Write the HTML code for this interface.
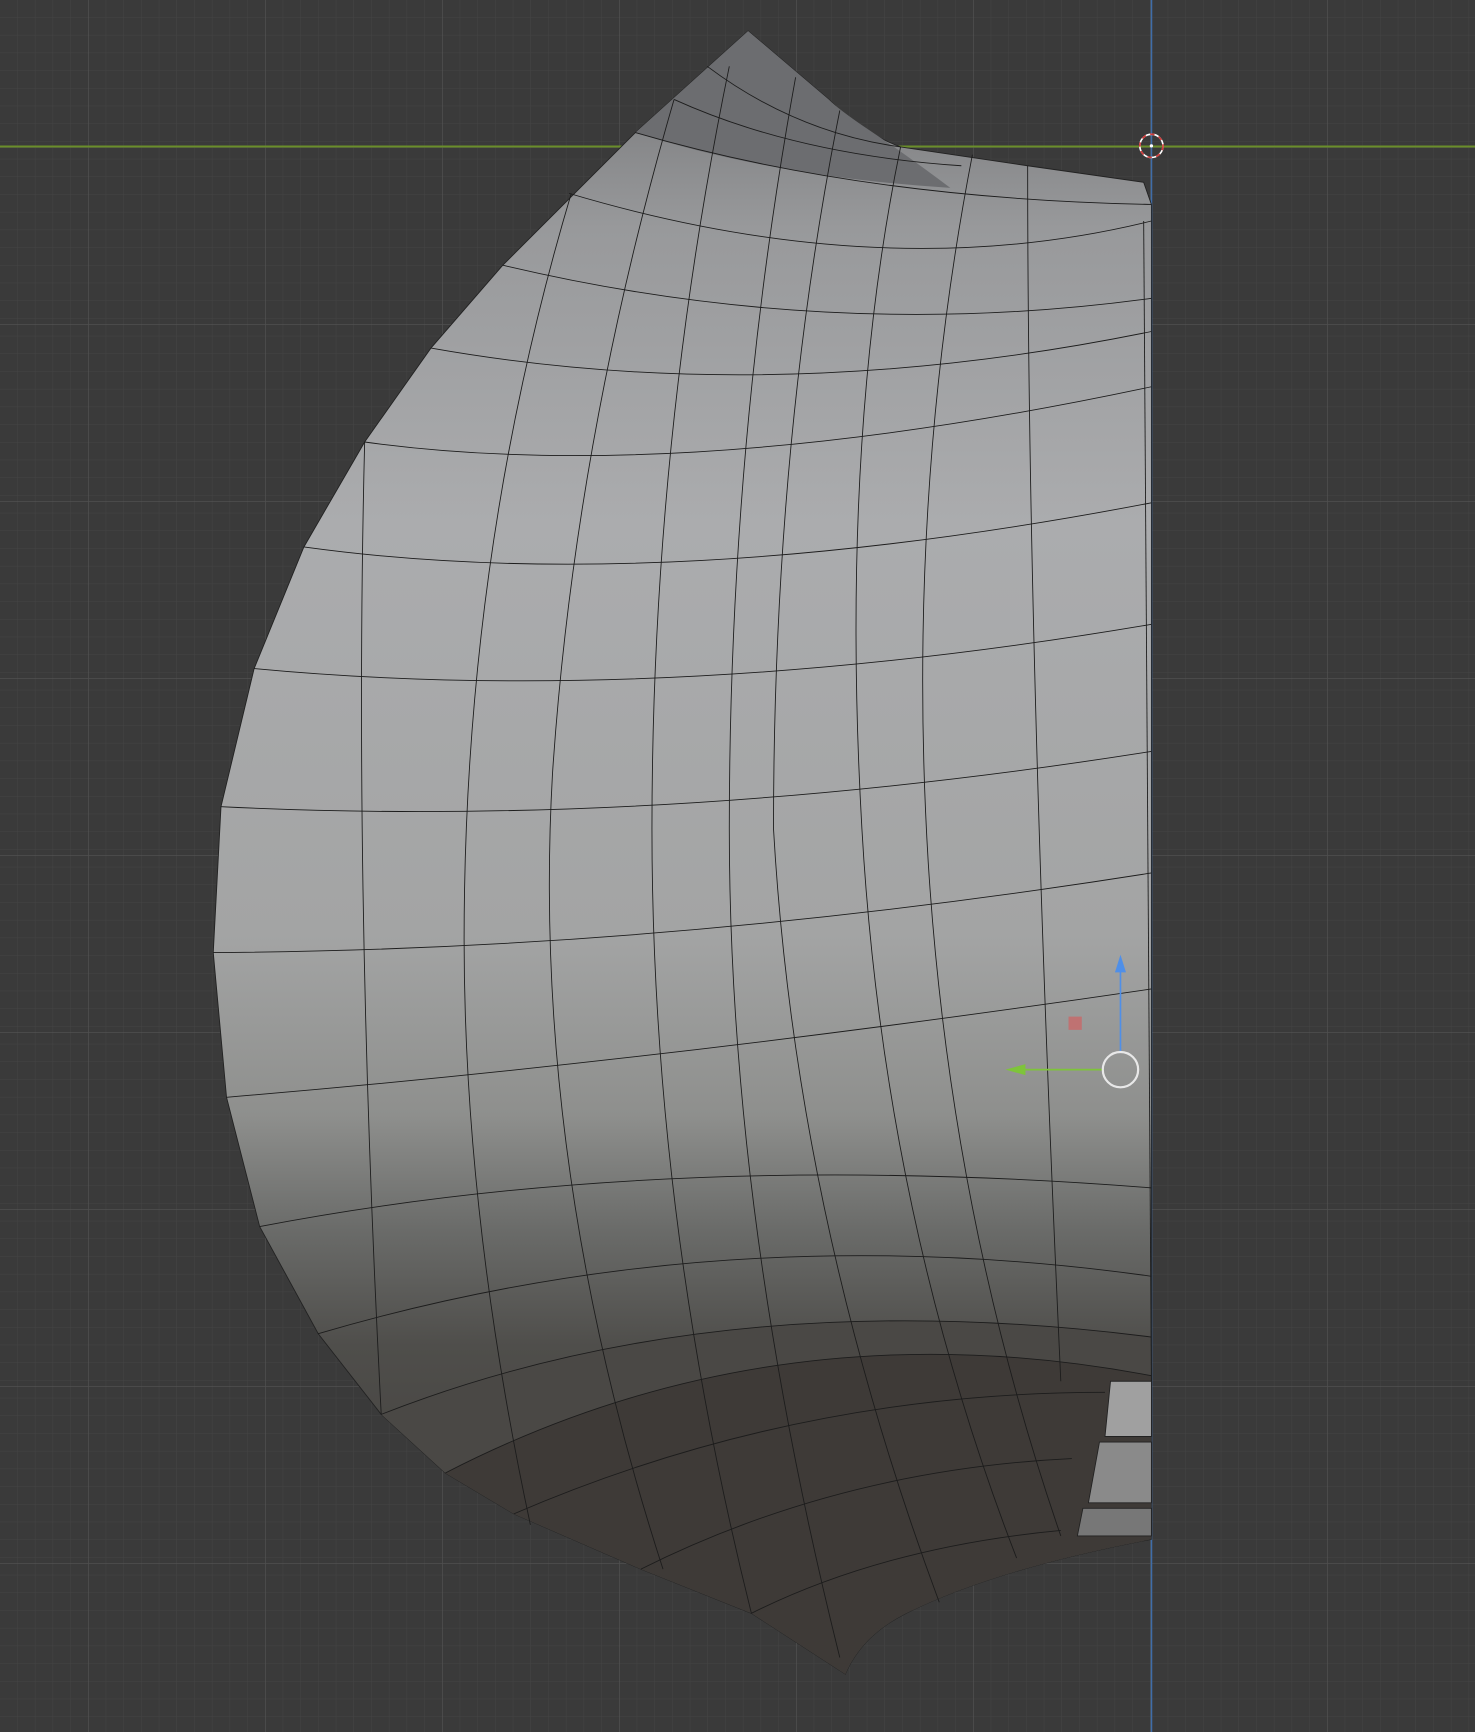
<!DOCTYPE html>
<html><head><style>html,body{margin:0;padding:0;background:#3a3a3a;overflow:hidden}svg{display:block}</style></head><body>
<svg width="1475" height="1732" viewBox="0 0 1475 1732" xmlns="http://www.w3.org/2000/svg">
<defs>
<pattern id="mi" width="17.7" height="17.7" patternUnits="userSpaceOnUse" x="0" y="0"><path d="M17.7 0V17.7M0 17.7H17.7" stroke="#444" stroke-width="1" fill="none"/></pattern>
<pattern id="ma" width="177" height="177" patternUnits="userSpaceOnUse" x="88" y="147"><path d="M0 0V177M0 0H177" stroke="#505050" stroke-width="1.5" fill="none"/></pattern>
<linearGradient id="g" x1="0" y1="0" x2="0" y2="1">
<stop offset="0" stop-color="#727375"/><stop offset="0.12" stop-color="#98999b"/><stop offset="0.3" stop-color="#abacae"/><stop offset="0.55" stop-color="#a3a4a4"/><stop offset="0.66" stop-color="#8e8f8d"/><stop offset="0.73" stop-color="#6a6b69"/><stop offset="0.8" stop-color="#4f4e4b"/><stop offset="1" stop-color="#3b3734"/>
</linearGradient>
</defs>
<rect width="1475" height="1732" fill="#3a3a3a"/>
<rect width="1475" height="1732" fill="url(#mi)"/>
<rect width="1475" height="1732" fill="url(#ma)"/>
<line x1="0" y1="146.5" x2="1475" y2="146.5" stroke="#6a8e2a" stroke-width="2"/>
<line x1="1151.5" y1="0" x2="1151.5" y2="1732" stroke="#3f6da8" stroke-width="1.5"/>
<g transform="scale(1.105)" stroke="#1c1c1c" stroke-width="0.8" fill="none">
<path d="M677 28 L575 120 L455 240 L390 315 L330 400 L275 495 L230 605 L200 730 L193 862 L205 993 L235 1110 L288 1207 L345 1280 L403 1333 L465 1370 L580 1420 L680 1460 L765 1515 Q780 1480 820 1460 Q900 1420 1042 1393 L1042 185 L1035 165 L930 150 L815 133 Q780 120 750 90 Z" fill="url(#g)" stroke="#222"/>
<path d="M345 1280 Q650 1160 1042 1210 L1042 1393 Q900 1420 820 1460 Q780 1480 765 1515 L680 1460 L580 1420 L465 1370 L403 1333Z" fill="#4a4845" stroke="none"/>
<path d="M403 1333 Q700 1180 1042 1245 L1042 1393 Q900 1420 820 1460 Q780 1480 765 1515 L680 1460 L580 1420 L465 1370Z" fill="#3e3a37" stroke="none"/>
<path d="M677 28 L575 120 Q700 160 860 170 Q820 140 790 120 Q760 100 750 90Z" fill="#6c6d70" stroke="none"/>
<path d="M1005 1250 L1042 1250 L1042 1300 L1000 1300Z" fill="#a0a0a0" stroke="#222"/>
<path d="M995 1305 L1042 1305 L1042 1360 L985 1360Z" fill="#8a8a8a" stroke="#222"/>
<path d="M980 1365 L1042 1365 L1042 1390 L975 1390Z" fill="#777" stroke="#222"/>
<path d="M575 120 Q780 180 1042 185"/>
<path d="M515 175 Q800 260 1042 200"/>
<path d="M455 240 Q750 310 1042 270"/>
<path d="M390 315 Q700 370 1042 300"/>
<path d="M330 400 Q620 440 1042 350"/>
<path d="M275 495 Q600 540 1042 455"/>
<path d="M230 605 Q600 640 1042 565"/>
<path d="M200 730 Q600 750 1042 680"/>
<path d="M193 862 Q600 860 1042 790"/>
<path d="M205 993 Q600 960 1042 895"/>
<path d="M235 1110 Q600 1040 1042 1075"/>
<path d="M288 1207 Q650 1100 1042 1155"/>
<path d="M345 1280 Q650 1160 1042 1210"/>
<path d="M403 1333 Q700 1180 1042 1245"/>
<path d="M465 1370 Q720 1260 1000 1260"/>
<path d="M580 1420 Q760 1330 970 1320"/>
<path d="M680 1460 Q800 1400 960 1385"/>
<path d="M640 60 Q720 120 815 133"/>
<path d="M610 90 Q720 140 870 150"/>
<path d="M330 400 Q320 800 345 1280"/>
<path d="M517 175 Q420 500 420 850 Q420 1100 480 1380"/>
<path d="M610 90 Q520 400 500 700 Q480 1050 600 1420"/>
<path d="M660 60 Q590 400 590 750 Q590 1100 680 1460"/>
<path d="M720 70 Q660 400 660 750 Q660 1100 760 1500"/>
<path d="M760 100 Q700 400 700 750 Q720 1100 850 1450"/>
<path d="M815 133 Q760 400 780 750 Q800 1100 920 1410"/>
<path d="M880 140 Q820 450 840 780 Q860 1100 960 1390"/>
<path d="M930 150 Q930 600 960 1250"/>
<path d="M1035 200 L1042 1250"/>
</g>
<g transform="scale(1.105)">
<line x1="1014" y1="952" x2="1014" y2="878" stroke="#4f8fe8" stroke-width="1.5"/>
<path d="M1014 864 L1009 880 L1019 880Z" fill="#4f8fe8"/>
<line x1="998" y1="968" x2="925" y2="968" stroke="#7ec43a" stroke-width="1.5"/>
<path d="M910 968 L928 963 L928 973Z" fill="#7ec43a"/>
<rect x="967" y="920" width="12" height="12" fill="#c56b6b" opacity="0.85"/>
<circle cx="1014" cy="968" r="16" fill="none" stroke="#e8e8e8" stroke-width="2"/>
<circle cx="1042" cy="132" r="10.5" fill="none" stroke="#fff" stroke-width="1.5"/>
<circle cx="1042" cy="132" r="10.5" fill="none" stroke="#d23c3c" stroke-width="1.5" stroke-dasharray="4 4"/>
<circle cx="1042" cy="132" r="1.5" fill="#fff"/>
</g>
</svg>
</body></html>
